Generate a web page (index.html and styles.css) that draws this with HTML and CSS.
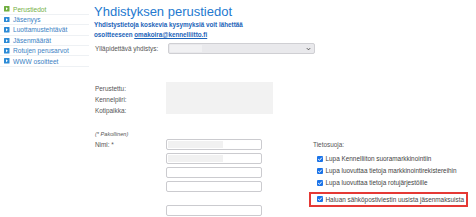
FILE: index.html
```html
<!DOCTYPE html>
<html lang="fi">
<head>
<meta charset="utf-8">
<title>Yhdistyksen perustiedot</title>
<link rel="stylesheet" href="styles.css">
</head>
<body>
<div class="page">
  <nav class="sidebar">
    <a class="nav-item active"><svg class="nav-icon" viewBox="0 0 6 6"><rect width="6" height="6" rx="0.6" fill="#6fae3f"/><path d="M2.2 1.4 L4.2 3 L2.2 4.6 Z" fill="#fff"/></svg>Perustiedot</a>
    <a class="nav-item"><svg class="nav-icon" viewBox="0 0 6 6"><rect width="6" height="6" rx="0.6" fill="#2b8ad6"/><path d="M2.2 1.4 L4.2 3 L2.2 4.6 Z" fill="#fff"/></svg>Jäsenyys</a>
    <a class="nav-item"><svg class="nav-icon" viewBox="0 0 6 6"><rect width="6" height="6" rx="0.6" fill="#2b8ad6"/><path d="M2.2 1.4 L4.2 3 L2.2 4.6 Z" fill="#fff"/></svg>Luottamustehtävät</a>
    <a class="nav-item"><svg class="nav-icon" viewBox="0 0 6 6"><rect width="6" height="6" rx="0.6" fill="#2b8ad6"/><path d="M2.2 1.4 L4.2 3 L2.2 4.6 Z" fill="#fff"/></svg>Jäsenmäärät</a>
    <a class="nav-item"><svg class="nav-icon" viewBox="0 0 6 6"><rect width="6" height="6" rx="0.6" fill="#2b8ad6"/><path d="M2.2 1.4 L4.2 3 L2.2 4.6 Z" fill="#fff"/></svg>Rotujen perusarvot</a>
    <a class="nav-item"><svg class="nav-icon" viewBox="0 0 6 6"><rect width="6" height="6" rx="0.6" fill="#2b8ad6"/><path d="M2.2 1.4 L4.2 3 L2.2 4.6 Z" fill="#fff"/></svg>WWW osoitteet</a>
  </nav>
  <main class="main">
    <h1 class="title">Yhdistyksen perustiedot</h1>
    <p class="intro">Yhdistystietoja koskevia kysymyksiä voit lähettää<br>osoitteeseen <a class="mail">omakoira@kennelliitto.fi</a></p>
    <div class="select-row">
      <span class="label">Ylläpidettävä yhdistys:</span>
      <div class="select"><span class="select-redact"></span><svg class="chevron" viewBox="0 0 6 4"><path d="M1 1 L3 3 L5 1" fill="none" stroke="#444" stroke-width="1.1"/></svg></div>
    </div>
    <div class="info">
      <div class="info-labels">
        <span class="label">Perustettu:</span>
        <span class="label">Kennelpiiri:</span>
        <span class="label">Kotipaikka:</span>
      </div>
      <div class="info-box"></div>
    </div>
    <p class="required">(* Pakollinen)</p>
    <div class="form">
      <div class="fields">
        <div class="field-row"><span class="label">Nimi: *</span><div class="input"><span class="input-redact"></span></div></div>
        <div class="field-row"><span class="label"></span><div class="input"><span class="input-redact"></span></div></div>
        <div class="field-row"><span class="label"></span><div class="input"></div></div>
        <div class="field-row"><span class="label"></span><div class="input"></div></div>
        <div class="field-row spaced"><span class="label"></span><div class="input"></div></div>
      </div>
      <div class="privacy">
        <div class="privacy-title">Tietosuoja:</div>
        <div class="check"><span class="box"><svg viewBox="0 0 8 8"><path d="M1.6 4.2 L3.3 5.8 L6.4 2.2" fill="none" stroke="#fff" stroke-width="1.3"/></svg></span>Lupa Kennelliiton suoramarkkinointiin</div>
        <div class="check"><span class="box"><svg viewBox="0 0 8 8"><path d="M1.6 4.2 L3.3 5.8 L6.4 2.2" fill="none" stroke="#fff" stroke-width="1.3"/></svg></span>Lupa luovuttaa tietoja markkinointirekistereihin</div>
        <div class="check"><span class="box"><svg viewBox="0 0 8 8"><path d="M1.6 4.2 L3.3 5.8 L6.4 2.2" fill="none" stroke="#fff" stroke-width="1.3"/></svg></span>Lupa luovuttaa tietoja rotujärjestöille</div>
        <div class="check highlight"><span class="box"><svg viewBox="0 0 8 8"><path d="M1.6 4.2 L3.3 5.8 L6.4 2.2" fill="none" stroke="#fff" stroke-width="1.3"/></svg></span>Haluan sähköpostiviestin uusista jäsenmaksuista</div>
      </div>
    </div>
  </main>
</div>
</body>
</html>
```
FILE: styles.css
```css
* { box-sizing: border-box; }
html, body { margin: 0; padding: 0; background: #fff; }
body {
  font-family: "Liberation Sans", Arial, sans-serif;
  font-size: 6.4px;
  color: #444;
  width: 476px;
  height: 217px;
  overflow: hidden;
}
.page { display: flex; }
.sidebar {
  width: 89px;
  flex: none;
  padding-top: 4.5px;
  display: flex;
  flex-direction: column;
}
.nav-item {
  display: flex;
  align-items: center;
  height: 10.4px;
  border-bottom: 1px solid #eef1f4;
  padding-left: 4px;
  color: #3b82c4;
  font-size: 6.6px;
}
.nav-item.active { color: #74b046; }
.nav-icon { width: 5.5px; height: 5.5px; margin-right: 3.5px; flex: none; }
.main { margin-left: 5px; flex: 1; }
.title {
  margin: 4px 0 0;
  font-size: 13px;
  line-height: 15px;
  font-weight: normal;
  color: #2479cf;
}
.intro {
  margin: 1px 0 0;
  font-size: 6.3px;
  line-height: 10px;
  font-weight: bold;
  color: #1b63b8;
}
.mail { color: #1b63b8; text-decoration: underline; }
.label { color: #555; }
.select-row {
  display: flex;
  align-items: center;
  margin-top: 3px;
  padding-left: 1px;
}
.select-row .label { width: 73px; flex: none; }
.select {
  width: 147px;
  height: 11px;
  background: #e9e9ec;
  border: 1px solid #cfcfd3;
  border-radius: 2px;
  display: flex;
  align-items: center;
  justify-content: space-between;
  padding: 0 3px 0 1px;
}
.select-redact { width: 32px; height: 7px; background: #f1f1f3; }
.chevron { width: 5px; height: 4px; }
.info { display: flex; margin-top: 28px; padding-left: 1px; }
.info-labels {
  width: 71px;
  flex: none;
  display: flex;
  flex-direction: column;
  padding-top: 0.5px;
}
.info-labels .label { height: 11px; line-height: 11px; }
.info-box { width: 107px; height: 32px; background: #f2f2f2; }
.required {
  margin: 13px 0 0;
  padding-left: 1px;
  font-style: italic;
  font-size: 5.6px;
  line-height: 10px;
  color: #555;
}
.form { display: flex; margin-top: 0; }
.fields { width: 215px; flex: none; display: flex; flex-direction: column; gap: 2.5px; padding-left: 1px; }
.field-row { display: flex; align-items: center; }
.field-row.spaced { margin-top: 10px; }
.field-row .label { width: 71px; flex: none; }
.input {
  width: 96px;
  height: 11.5px;
  border: 1px solid #cbcbcf;
  border-radius: 2px;
  background: #fff;
  padding: 1px;
  display: flex;
}
.input-redact { width: 55px; background: #f1f1f1; }
.privacy { display: flex; flex-direction: column; padding-top: 1px; }
.privacy-title { line-height: 10px; margin-left: 4px; margin-bottom: 3px; color: #555; }
.check {
  display: flex;
  align-items: center;
  height: 12px;
  padding-left: 8px;
  color: #444;
  white-space: nowrap;
}
.box {
  width: 6px;
  height: 6px;
  background: #1a73e8;
  border-radius: 1px;
  margin-right: 2.5px;
  display: flex;
  flex: none;
}
.box svg { width: 6px; height: 6px; }
.check.highlight {
  width: 159px;
  height: 15px;
  border: 2px solid #e53935;
  padding-left: 6px;
  margin-top: 3px;
}
```
